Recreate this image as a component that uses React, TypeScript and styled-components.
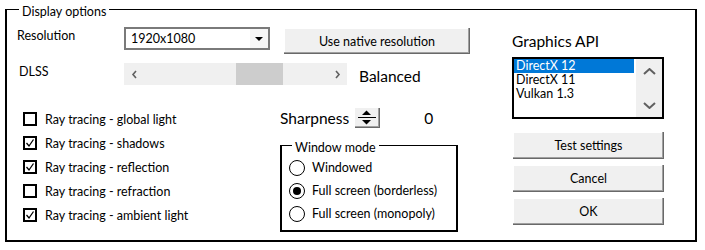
import styled, { createGlobalStyle } from 'styled-components';

const GlobalStyle = createGlobalStyle`
  body {
    margin: 0;
    background: #ffffff;
    font-family: Lato, "Liberation Sans", sans-serif;
    color: #000000;
  }
`;

const GroupFrame = styled.div<{ $w: number; $h: number }>`
  position: relative;
  box-sizing: border-box;
  width: ${(p) => p.$w}px;
  height: ${(p) => p.$h}px;
  border: 2px solid #000;
  border-top-width: 1px;
`;

const OuterFrame = styled(GroupFrame)`
  margin: 9px 0 0 5px;
  display: flex;
  align-items: flex-start;
  padding: 17px 0 0 10px;
`;

const FrameCaption = styled.span<{ $left: number }>`
  position: absolute;
  top: -5px;
  left: ${(p) => p.$left}px;
  padding: 0 3px;
  background: #fff;
  font-size: 12.5px;
  line-height: 14px;
`;

const LeftPane = styled.div`
  width: 453px;
  display: flex;
  flex-direction: column;
`;

const ControlRow = styled.div<{ $gap?: number }>`
  display: flex;
  align-items: flex-start;
  margin-top: ${(p) => p.$gap ?? 0}px;
`;

const FieldLabel = styled.div<{ $indent?: number }>`
  box-sizing: border-box;
  width: 107px;
  padding-left: ${(p) => p.$indent ?? 0}px;
  font-size: 12.5px;
  line-height: 16px;
  margin-top: 1px;
`;

const ComboBox = styled.div`
  box-sizing: border-box;
  width: 146px;
  height: 23px;
  border: 2px solid #7a7a7a;
  display: flex;
  align-items: stretch;
  background: #fff;
`;

const ComboText = styled.div`
  flex: 1;
  padding-left: 5px;
  font-size: 12.5px;
  line-height: 19px;
`;

const ComboArrow = styled.div`
  width: 18px;
  background: #f6f6f6;
  display: flex;
  align-items: center;
  justify-content: center;
`;

const PushButton = styled.button<{ $w: number; $h: number }>`
  box-sizing: border-box;
  width: ${(p) => p.$w}px;
  height: ${(p) => p.$h}px;
  padding: 0;
  border: none;
  background: #f0f0f0;
  box-shadow: inset -1px -1px 0 #696969, inset -2px -2px 0 #a0a0a0, inset 1px 1px 0 #ffffff;
  font-family: inherit;
  font-size: 12.5px;
  color: #000;
  text-align: center;
`;

const NativeButton = styled(PushButton)`
  margin-left: 14px;
  margin-top: 1px;
`;

const ScrollBar = styled.div`
  width: 223px;
  height: 22px;
  background: #f0f0f0;
  display: flex;
  align-items: center;
`;

const ScrollArrow = styled.div`
  width: 20px;
  height: 22px;
  display: flex;
  align-items: center;
  justify-content: center;
`;

const ScrollTrack = styled.div`
  flex: 1;
  height: 22px;
  display: flex;
`;

const ScrollThumb = styled.div<{ $offset: number; $size: number }>`
  margin-left: ${(p) => p.$offset}px;
  width: ${(p) => p.$size}px;
  height: 22px;
  background: #cdcdcd;
`;

const BigText = styled.div<{ $ml?: number }>`
  font-size: 15.5px;
  line-height: 22px;
  margin-left: ${(p) => p.$ml ?? 0}px;
`;

const BalancedText = styled(BigText)`
  margin-top: 2px;
`;

const BottomArea = styled.div`
  display: flex;
  margin-top: 20px;
`;

const CheckList = styled.div`
  box-sizing: border-box;
  width: 263px;
  padding-left: 6px;
  display: flex;
  flex-direction: column;
`;

const CheckRow = styled.div`
  height: 24px;
  display: flex;
  align-items: center;
  gap: 8px;
  font-size: 12.5px;
`;

const CheckBox = styled.div`
  box-sizing: border-box;
  width: 14px;
  height: 14px;
  border: 2px solid #000;
  background: #fff;
  display: flex;
  align-items: center;
  justify-content: center;
`;

const MiddleColumn = styled.div`
  display: flex;
  flex-direction: column;
`;

const SharpRow = styled.div`
  height: 22px;
  display: flex;
  align-items: center;
`;

const SpinButton = styled.div`
  width: 25px;
  height: 20px;
  margin-left: 6px;
  background: #f0f0f0;
  box-shadow: inset -1px -1px 0 #696969, inset -2px -2px 0 #a0a0a0;
  display: flex;
`;

const WindowFrame = styled(GroupFrame)`
  margin-top: 16px;
  padding: 10px 0 0 7px;
  display: flex;
  flex-direction: column;
`;

const RadioRow = styled.div`
  height: 23px;
  display: flex;
  align-items: center;
  gap: 7px;
  font-size: 12.5px;
`;

const RadioCircle = styled.div<{ $on: boolean }>`
  box-sizing: border-box;
  width: 16px;
  height: 16px;
  border: 1.5px solid #000;
  border-radius: 50%;
  display: flex;
  align-items: center;
  justify-content: center;
  &::after {
    content: '';
    width: 8px;
    height: 8px;
    border-radius: 50%;
    background: ${(p) => (p.$on ? '#000' : 'transparent')};
  }
`;

const RightPane = styled.div`
  width: 152px;
  margin-left: 42px;
  display: flex;
  flex-direction: column;
`;

const ApiLabel = styled(BigText)`
  margin-top: 4px;
  line-height: 20px;
`;

const ListBox = styled.div`
  box-sizing: border-box;
  height: 62px;
  margin-top: 6px;
  border: 2px solid #000;
  display: flex;
`;

const ListItems = styled.div`
  width: 120px;
  display: flex;
  flex-direction: column;
`;

const ListItem = styled.div<{ $selected?: boolean }>`
  height: 14px;
  padding-left: 2px;
  font-size: 12.5px;
  line-height: 14px;
  background: ${(p) => (p.$selected ? '#0078d7' : 'transparent')};
  color: ${(p) => (p.$selected ? '#fff' : '#000')};
`;

const ListScroll = styled.div`
  flex: 1;
  margin-left: 2px;
  background: #f0f0f0;
  display: flex;
  flex-direction: column;
  justify-content: space-between;
  align-items: center;
  padding: 9px 0 8px;
`;

const ActionButton = styled(PushButton)<{ $gap: number }>`
  margin-top: ${(p) => p.$gap}px;
  margin-left: 1px;
`;

const Chevron = ({ dir }: { dir: 'left' | 'right' | 'up' | 'down' }) => {
  const pts = {
    left: '5,1 2,4.5 5,8',
    right: '2,1 5,4.5 2,8',
    up: '1,6 6.5,1 12,6',
    down: '1,1 6.5,6 12,1',
  }[dir];
  const horiz = dir === 'left' || dir === 'right';
  return (
    <svg width={horiz ? 7 : 13} height={horiz ? 9 : 7} viewBox={horiz ? '0 0 7 9' : '0 0 13 7'}>
      <polyline points={pts} fill="none" stroke="#606060" strokeWidth={horiz ? 1.6 : 2} />
    </svg>
  );
};

const checks = [
  { label: 'Ray tracing - global light', on: false },
  { label: 'Ray tracing - shadows', on: true },
  { label: 'Ray tracing - reflection', on: true },
  { label: 'Ray tracing - refraction', on: false },
  { label: 'Ray tracing - ambient light', on: true },
];

const modes = [
  { label: 'Windowed', on: false },
  { label: 'Full screen (borderless)', on: true },
  { label: 'Full screen (monopoly)', on: false },
];

function App() {
  return (
    <>
      <GlobalStyle />
      <OuterFrame $w={692} $h={233}>
        <FrameCaption $left={12}>Display options</FrameCaption>
        <LeftPane>
          <ControlRow>
            <FieldLabel>Resolution</FieldLabel>
            <ComboBox>
              <ComboText>1920x1080</ComboText>
              <ComboArrow>
                <svg width="8" height="4" viewBox="0 0 8 4">
                  <polygon points="0,0 8,0 4,4" fill="#000" />
                </svg>
              </ComboArrow>
            </ComboBox>
            <NativeButton $w={186} $h={26}>Use native resolution</NativeButton>
          </ControlRow>
          <ControlRow $gap={9}>
            <FieldLabel $indent={2}>DLSS</FieldLabel>
            <ScrollBar>
              <ScrollArrow>
                <Chevron dir="left" />
              </ScrollArrow>
              <ScrollTrack>
                <ScrollThumb $offset={92} $size={47} />
              </ScrollTrack>
              <ScrollArrow>
                <Chevron dir="right" />
              </ScrollArrow>
            </ScrollBar>
            <BalancedText $ml={12}>Balanced</BalancedText>
          </ControlRow>
          <BottomArea>
            <CheckList>
              {checks.map((c) => (
                <CheckRow key={c.label}>
                  <CheckBox>
                    {c.on && (
                      <svg width="10" height="10" viewBox="0 0 10 10">
                        <polyline points="1.5,5 4,8 8.5,1.5" fill="none" stroke="#000" strokeWidth="1.3" />
                      </svg>
                    )}
                  </CheckBox>
                  {c.label}
                </CheckRow>
              ))}
            </CheckList>
            <MiddleColumn>
              <SharpRow>
                <BigText>Sharpness</BigText>
                <SpinButton>
                  <svg width="23" height="18" viewBox="0 0 23 18">
                    <polygon points="7,7 16,7 11.5,2.5" fill="#000" />
                    <line x1="3" y1="9.5" x2="21" y2="9.5" stroke="#000" strokeWidth="1" />
                    <polygon points="7,12 16,12 11.5,16.5" fill="#000" />
                  </svg>
                </SpinButton>
                <BigText $ml={44}>0</BigText>
              </SharpRow>
              <WindowFrame $w={178} $h={87}>
                <FrameCaption $left={10}>Window mode</FrameCaption>
                {modes.map((m) => (
                  <RadioRow key={m.label}>
                    <RadioCircle $on={m.on} />
                    {m.label}
                  </RadioRow>
                ))}
              </WindowFrame>
            </MiddleColumn>
          </BottomArea>
        </LeftPane>
        <RightPane>
          <ApiLabel>Graphics API</ApiLabel>
          <ListBox>
            <ListItems>
              <ListItem $selected>DirectX 12</ListItem>
              <ListItem>DirectX 11</ListItem>
              <ListItem>Vulkan 1.3</ListItem>
            </ListItems>
            <ListScroll>
              <Chevron dir="up" />
              <Chevron dir="down" />
            </ListScroll>
          </ListBox>
          <ActionButton $w={151} $h={27} $gap={13}>Test settings</ActionButton>
          <ActionButton $w={151} $h={27} $gap={6}>Cancel</ActionButton>
          <ActionButton $w={151} $h={27} $gap={6}>OK</ActionButton>
        </RightPane>
      </OuterFrame>
    </>
  );
}

export default App;
